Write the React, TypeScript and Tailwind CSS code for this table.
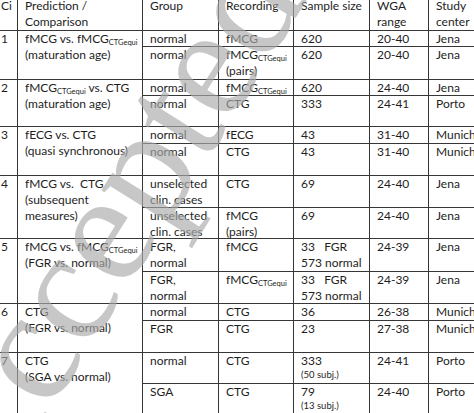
import React from "react";

const CT = () => <sub className="text-[7.5px] leading-none relative bottom-[-2px] align-baseline">CTGequi</sub>;

type SubRow = {
  h: string;
  group: React.ReactNode;
  rec: React.ReactNode;
  size: React.ReactNode;
  wga: string;
  center: string;
};

type Group = { ci: string; pred: React.ReactNode; rows: SubRow[] };

const small = (a: string, b: string) => (
  <>
    <div>{a}</div>
    <div className="text-[9.5px] leading-[11px]">{b}</div>
  </>
);

const groups: Group[] = [
  {
    ci: "1",
    pred: (<><div>fMCG vs. fMCG<CT /></div><div>(maturation age)</div></>),
    rows: [
      { h: "h-[16px]", group: "normal", rec: "fMCG", size: "620", wga: "20-40", center: "Jena" },
      { h: "h-[33px]", group: "normal", rec: (<><div>fMCG<CT /></div><div>(pairs)</div></>), size: "620", wga: "20-40", center: "Jena" },
    ],
  },
  {
    ci: "2",
    pred: (<><div>fMCG<CT /> vs. CTG</div><div>(maturation age)</div></>),
    rows: [
      { h: "h-[16px]", group: "normal", rec: (<>fMCG<CT /></>), size: "620", wga: "24-40", center: "Jena" },
      { h: "h-[31px]", group: "normal", rec: "CTG", size: "333", wga: "24-41", center: "Porto" },
    ],
  },
  {
    ci: "3",
    pred: (<><div>fECG vs. CTG</div><div>(quasi synchronous)</div></>),
    rows: [
      { h: "h-[17px]", group: "normal", rec: "fECG", size: "43", wga: "31-40", center: "Munich" },
      { h: "h-[32px]", group: "normal", rec: "CTG", size: "43", wga: "31-40", center: "Munich" },
    ],
  },
  {
    ci: "4",
    pred: (<><div>fMCG vs.&nbsp; CTG</div><div>(subsequent</div><div>measures)</div></>),
    rows: [
      { h: "h-[32px]", group: (<><div>unselected</div><div>clin. cases</div></>), rec: "CTG", size: "69", wga: "24-40", center: "Jena" },
      { h: "h-[31px]", group: (<><div>unselected</div><div>clin. cases</div></>), rec: (<><div>fMCG</div><div>(pairs)</div></>), size: "69", wga: "24-40", center: "Jena" },
    ],
  },
  {
    ci: "5",
    pred: (<><div>fMCG vs. fMCG<CT /></div><div>(FGR vs. normal)</div></>),
    rows: [
      { h: "h-[33px]", group: (<><div>FGR,</div><div>normal</div></>), rec: "fMCG", size: (<><div>33&nbsp;&nbsp; FGR</div><div>573 normal</div></>), wga: "24-39", center: "Jena" },
      { h: "h-[32px]", group: (<><div>FGR,</div><div>normal</div></>), rec: (<>fMCG<CT /></>), size: (<><div>33&nbsp;&nbsp; FGR</div><div>573 normal</div></>), wga: "24-39", center: "Jena" },
    ],
  },
  {
    ci: "6",
    pred: (<><div>CTG</div><div>(FGR vs. normal)</div></>),
    rows: [
      { h: "h-[17px]", group: "normal", rec: "CTG", size: "36", wga: "26-38", center: "Munich" },
      { h: "h-[32px]", group: "FGR", rec: "CTG", size: "23", wga: "27-38", center: "Munich" },
    ],
  },
  {
    ci: "7",
    pred: (<><div>CTG</div><div>(SGA vs. normal)</div></>),
    rows: [
      { h: "h-[31px]", group: "normal", rec: "CTG", size: small("333", "(50 subj.)"), wga: "24-41", center: "Porto" },
      { h: "h-[34px]", group: "SGA", rec: "CTG", size: small("79", "(13 subj.)"), wga: "24-40", center: "Porto" },
    ],
  },
];

const cell = "border border-[#363636] align-top pl-[7px] pr-[1px] py-0 text-left font-normal whitespace-nowrap";

function Cell({ children, rowSpan, th }: { children: React.ReactNode; rowSpan?: number; th?: boolean }) {
  const inner = <div className="-mb-[4px]">{children}</div>;
  return th ? (
    <th className={cell}>{inner}</th>
  ) : (
    <td className={cell} rowSpan={rowSpan}>{inner}</td>
  );
}

export default function App() {
  return (
    <div className="relative w-[474px] h-[413px] overflow-hidden bg-white font-['Lato',sans-serif] text-[12px] leading-[16px] text-[#1e1e1e]">
      <table className="table-fixed border-collapse w-[506px] ml-[-7px] mt-[-3px]">
        <colgroup>
          <col className="w-[24px]" />
          <col className="w-[125px]" />
          <col className="w-[76px]" />
          <col className="w-[75px]" />
          <col className="w-[76px]" />
          <col className="w-[59px]" />
          <col className="w-[71px]" />
        </colgroup>
        <thead>
          <tr className="h-[33px]">
            <Cell th>Ci</Cell>
            <Cell th><div>Prediction /</div><div>Comparison</div></Cell>
            <Cell th>Group</Cell>
            <Cell th>Recording</Cell>
            <Cell th>Sample size</Cell>
            <Cell th><div>WGA</div><div>range</div></Cell>
            <Cell th><div>Study</div><div>center</div></Cell>
          </tr>
        </thead>
        <tbody>
          {groups.map((g) =>
            g.rows.map((r, i) => (
              <tr key={g.ci + i} className={r.h}>
                {i === 0 && (
                  <>
                    <Cell rowSpan={2}>{g.ci}</Cell>
                    <Cell rowSpan={2}>{g.pred}</Cell>
                  </>
                )}
                <Cell>{r.group}</Cell>
                <Cell>{r.rec}</Cell>
                <Cell>{r.size}</Cell>
                <Cell>{r.wga}</Cell>
                <Cell>{r.center}</Cell>
              </tr>
            ))
          )}
        </tbody>
      </table>
      <div className="pointer-events-none absolute left-[-126px] top-[440px] origin-top-left -rotate-[58deg] font-['Liberation_Serif',serif] text-[160px] leading-none text-[#aaaaaa] opacity-65 whitespace-nowrap">
        Accepted Manuscript
      </div>
    </div>
  );
}
